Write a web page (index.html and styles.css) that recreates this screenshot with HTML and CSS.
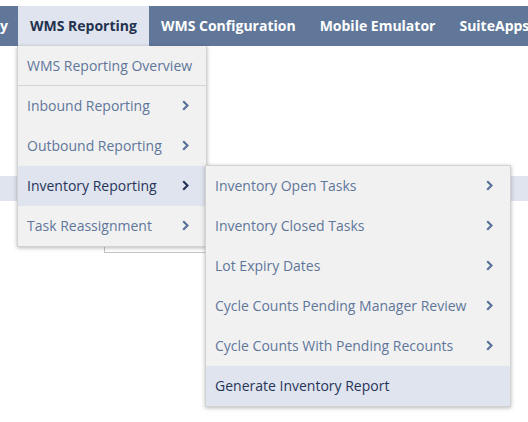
FILE: index.html
```html
<!DOCTYPE html>
<html>
<head>
<meta charset="utf-8">
<link rel="stylesheet" href="styles.css">
</head>
<body>
<div class="top-gap"></div>
<nav class="navbar">
  <div class="tab tab-first">y</div>
  <div class="tab tab-active">WMS Reporting</div>
  <div class="tab">WMS Configuration</div>
  <div class="tab">Mobile Emulator</div>
  <div class="tab">SuiteApps</div>
</nav>
<main class="content">
  <div class="band"></div>
  <div class="panel"></div>
</main>

<ul class="menu menu-main">
  <li class="item item-sep"><span>WMS Reporting Overview</span></li>
  <li class="item"><span>Inbound Reporting</span><svg class="chev" width="7" height="11" viewBox="0 0 7 11"><polyline points="1.2,1.2 5.5,5.5 1.2,9.8"/></svg></li>
  <li class="item"><span>Outbound Reporting</span><svg class="chev" width="7" height="11" viewBox="0 0 7 11"><polyline points="1.2,1.2 5.5,5.5 1.2,9.8"/></svg></li>
  <li class="item item-active"><span>Inventory Reporting</span><svg class="chev" width="7" height="11" viewBox="0 0 7 11"><polyline points="1.2,1.2 5.5,5.5 1.2,9.8"/></svg></li>
  <li class="item"><span>Task Reassignment</span><svg class="chev" width="7" height="11" viewBox="0 0 7 11"><polyline points="1.2,1.2 5.5,5.5 1.2,9.8"/></svg></li>
</ul>

<ul class="menu menu-sub">
  <li class="item"><span>Inventory Open Tasks</span><svg class="chev" width="7" height="11" viewBox="0 0 7 11"><polyline points="1.2,1.2 5.5,5.5 1.2,9.8"/></svg></li>
  <li class="item"><span>Inventory Closed Tasks</span><svg class="chev" width="7" height="11" viewBox="0 0 7 11"><polyline points="1.2,1.2 5.5,5.5 1.2,9.8"/></svg></li>
  <li class="item"><span>Lot Expiry Dates</span><svg class="chev" width="7" height="11" viewBox="0 0 7 11"><polyline points="1.2,1.2 5.5,5.5 1.2,9.8"/></svg></li>
  <li class="item"><span>Cycle Counts Pending Manager Review</span><svg class="chev" width="7" height="11" viewBox="0 0 7 11"><polyline points="1.2,1.2 5.5,5.5 1.2,9.8"/></svg></li>
  <li class="item"><span>Cycle Counts With Pending Recounts</span><svg class="chev" width="7" height="11" viewBox="0 0 7 11"><polyline points="1.2,1.2 5.5,5.5 1.2,9.8"/></svg></li>
  <li class="item item-active"><span>Generate Inventory Report</span></li>
</ul>
</body>
</html>
```
FILE: styles.css
```css
html, body {
  margin: 0;
  padding: 0;
  background: #ffffff;
  font-family: "Open Sans", "Noto Sans", sans-serif;
  overflow: hidden;
}
.top-gap {
  height: 6px;
}
.navbar {
  display: flex;
  height: 40px;
  background: #607799;
  white-space: nowrap;
  overflow: hidden;
}
.tab {
  padding: 0 12px;
  line-height: 40px;
  font-size: 14px;
  font-weight: 700;
  color: #ffffff;
}
.tab-first {
  padding: 0 10px 0 0;
}
.tab-active {
  background: #dfe4ee;
  color: #24324f;
}
.content {
  padding-top: 130px;
}
.band {
  height: 25px;
  background: #dfe4ee;
}
.panel {
  margin-left: 104px;
  width: 320px;
  height: 51px;
  border: 1px solid #c4c4c4;
  border-top: none;
}
.menu {
  position: absolute;
  margin: 0;
  padding: 0;
  list-style: none;
  background: #f1f1f1;
  border: 1px solid #d2d2d2;
  border-top: none;
  box-shadow: 0 1px 4px rgba(0, 0, 0, 0.28);
}
.menu-main {
  left: 17px;
  top: 46px;
  width: 188px;
  z-index: 1;
}
.menu-sub {
  left: 205px;
  top: 165px;
  width: 304px;
  border-top: 1px solid #d2d2d2;
  z-index: 2;
}
.item {
  display: flex;
  align-items: center;
  justify-content: space-between;
  box-sizing: border-box;
  height: 40px;
  padding: 0 17px 1px 9px;
  font-size: 14px;
  color: #5f769b;
  white-space: nowrap;
}
.item-sep {
  border-bottom: 1px solid #d6d6d6;
  padding-bottom: 0;
}
.item-active {
  background: #dfe4ee;
  color: #26345a;
}
.chev {
  flex: none;
  fill: none;
  stroke: #56709a;
  stroke-width: 2.2;
}
.item-active .chev {
  stroke: #26345a;
}
```
